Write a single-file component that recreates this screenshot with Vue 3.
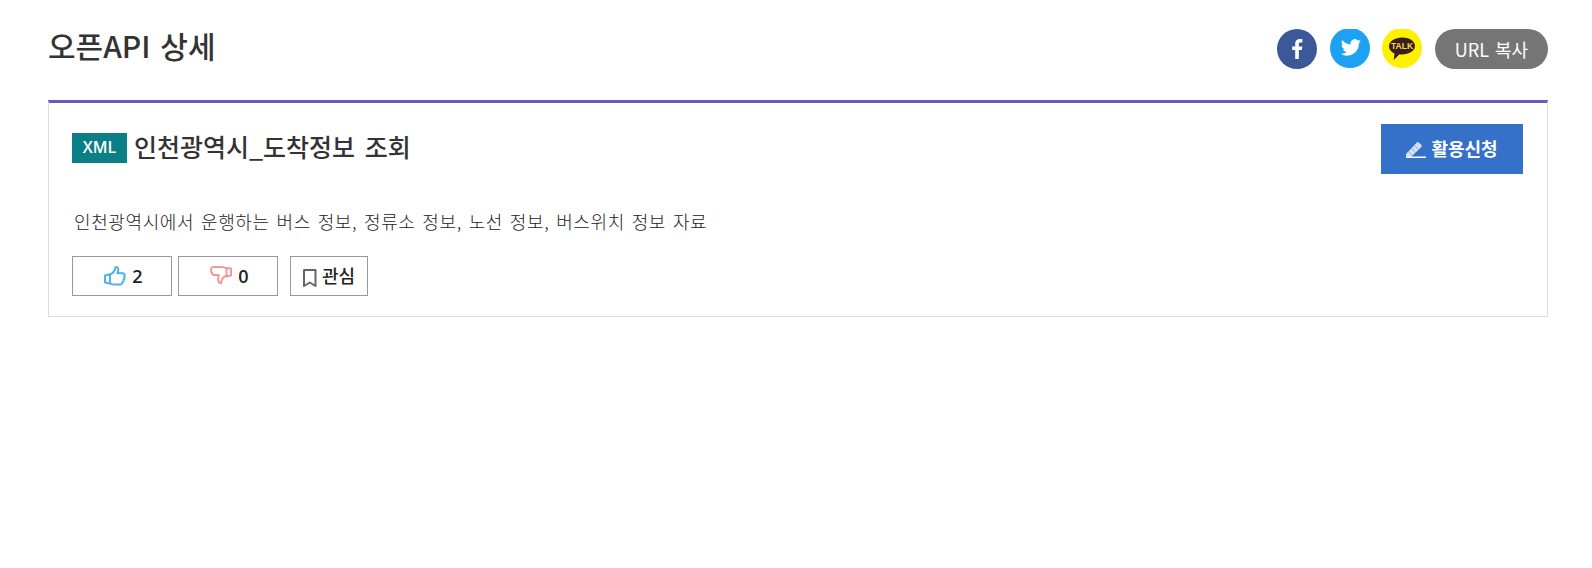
<script setup>
const desc = '인천광역시에서 운행하는 버스 정보, 정류소 정보, 노선 정보, 버스위치 정보 자료'
</script>

<template>
  <div class="page">
    <div class="top">
      <h2 class="page-title">오픈API 상세</h2>
      <div class="share">
        <a class="sns fb">
          <svg width="40" height="40" viewBox="0 0 40 40"><path fill="#fff" d="M21.800 30v-9h3l.5-3.600h-3.500v-2.200c0-1 .3-1.700 1.800-1.700h1.800V10.300c-.4 0-1.500-.2-2.700-.2-2.700 0-4.500 1.600-4.500 4.600v2.700h-3V21h3v9z"/></svg>
        </a>
        <a class="sns tw">
          <svg width="40" height="40" viewBox="-2 -1 27 27"><path fill="#fff" d="M19 7.900c-.5.300-1.100.4-1.600.5.600-.4 1-1 1.200-1.600-.5.300-1.100.6-1.800.7a2.800 2.800 0 0 0-4.800 2.600c-2.300-.1-4.400-1.200-5.800-3-.7 1.300-.4 2.900.9 3.700-.5 0-.9-.1-1.300-.3 0 1.400 1 2.500 2.300 2.800-.4.100-.8.100-1.300 0 .4 1.100 1.400 1.900 2.600 1.900a5.600 5.600 0 0 1-4.100 1.200 8 8 0 0 0 12.200-7.100c.6-.4 1.100-.9 1.500-1.400z"/></svg>
        </a>
        <a class="sns ka">
          <svg width="40" height="40" viewBox="0 0 40 40">
            <path fill="#3a1d1d" d="M20 9.500c-7 0-13 3.800-13 8.700 0 3.100 2.200 5.700 5.600 7.200l-.9 6c0 .3.200.4.500.2l5.300-5.400c.8.100 1.600.2 2.500.2 7 0 13-3.600 13-8.500S27 9.500 20 9.500z"/>
            <text x="20" y="21" text-anchor="middle" class="talk">TALK</text>
          </svg>
        </a>
        <button class="url-btn">URL 복사</button>
      </div>
    </div>

    <div class="card">
      <div class="card-head">
        <div class="name">
          <span class="badge">XML</span>
          <strong class="api-title">인천광역시_도착정보 조회</strong>
        </div>
        <a class="apply">
          <svg width="20" height="18" viewBox="0 0 20 18">
            <path fill="#d4e0f4" d="M0 14 10.800 2.600c.6-.6 1.500-.6 2 0l2.600 2.400c.6.600.6 1.400 0 2L5 17H0z"/>
            <path fill="none" stroke="#7fa3dc" stroke-width=".8" d="M2.500 11.500l4 4M5.500 8.500l4 4M8.500 5.500l4 4"/>
            <path fill="#fff" d="M7 16.500h13V18H0v-1z"/>
          </svg>
          <span class="apply-text">활용신청</span>
        </a>
      </div>
      <p class="desc">{{ desc }}</p>
      <div class="actions">
        <button class="act vote">
          <svg width="22" height="20" viewBox="0 0 22 20" fill="none" stroke="#4db3e8" stroke-width="2" stroke-linejoin="round">
            <path d="M1 9.500l5-1.300v9.300L1 16.500z"/>
            <path d="M6 8.500c3-1.200 5-3.800 5.500-7 .1-.8 2.800-.8 2.800 2 0 1.300-.4 2.500-1 3.700h5.400c2.200 0 2.500 2.500 1.300 3.500.8 1 .6 2.400-.5 3 .4 1.200-.1 2.300-1.200 2.600.1 1.200-.6 2.200-2.200 2.200H10c-1.600 0-2.700-.6-4-1"/>
          </svg>
          <span>2</span>
        </button>
        <button class="act vote">
          <svg width="22" height="20" viewBox="0 0 22 20" fill="none" stroke="#f09a9a" stroke-width="2" stroke-linejoin="round">
            <path d="M21 2.500l-4.500-.6v8.600l4.500-.9z"/>
            <path d="M16.500 2.500C15 1.600 13.500 1 12 1H3.500C2 1 1 2 1.300 3.200 1 4.500 1 6 2 7c0 1.200 1 2 2.500 2h4.300c-.6 2-.8 3.500-.5 5.500.4 2.500 3 3.500 3 2 .2-3.500 2.400-5.800 5.200-7"/>
          </svg>
          <span>0</span>
        </button>
        <button class="act fav">
          <svg class="mark" width="14" height="18" viewBox="0 0 14 18" fill="none" stroke="#666" stroke-width="2" stroke-linejoin="round">
            <path d="M1 1h11.500v16L6.800 13.500 1 17z"/>
          </svg>
          <span>관심</span>
        </button>
      </div>
    </div>
  </div>
</template>

<style scoped>
.page {
  padding: 0 44px 0 48px;
  font-family: "Noto Sans CJK KR", "Open Sans", sans-serif;
  color: #333;
}
.top {
  display: flex;
  justify-content: space-between;
  align-items: flex-start;
  height: 100px;
}
.page-title {
  margin: 24px 0 0;
  font-size: 30px;
  line-height: 42px;
  font-weight: 500;
  word-spacing: 3px;
}
.share {
  display: flex;
  align-items: flex-start;
  margin-top: 29px;
  height: 40px;
  overflow: hidden;
}
.sns {
  width: 40px;
  height: 40px;
  border-radius: 50%;
  margin-right: 13px;
  display: block;
}
.sns svg { display: block; }
.fb { background: #3b5998; }
.tw {
  background: #1da1f2;
  margin-top: -1px;
  margin-right: 12px;
}
.ka {
  background: #fff000;
  margin-top: -1px;
}
.talk {
  font-family: "Liberation Sans", sans-serif;
  font-size: 8.500px;
  font-weight: 700;
  fill: #f5d94e;
}
.url-btn {
  width: 113px;
  height: 40px;
  border: 0;
  border-radius: 20px;
  background: #757575;
  color: #fff;
  font-family: "Noto Sans CJK KR", "Open Sans", sans-serif;
  font-size: 18px;
  font-weight: 400;
  word-spacing: 2px;
  padding: 0;
}
.card {
  border: 1px solid #ddd;
  border-top: 3px solid #675ac4;
  height: 217px;
  padding: 21px 24px 0 23px;
  box-sizing: border-box;
}
.card-head {
  display: flex;
  justify-content: space-between;
  align-items: flex-start;
}
.name {
  display: flex;
  align-items: flex-start;
  margin-top: 9px;
}
.badge {
  width: 55px;
  height: 30px;
  line-height: 28px;
  background: #0a7f85;
  color: #fff;
  font-family: "Open Sans", sans-serif;
  font-size: 16px;
  font-weight: 600;
  text-align: center;
  margin-right: 7px;
}
.api-title {
  font-size: 25px;
  line-height: 26px;
  font-weight: 500;
  word-spacing: 4px;
}
.apply {
  width: 142px;
  height: 50px;
  background: #3571c8;
  color: #fff;
  font-size: 18px;
  font-weight: 700;
  display: flex;
  align-items: center;
  justify-content: center;
  gap: 5px;
}
.apply-text {
  margin-bottom: 2px;
}
.desc {
  margin: 24px 0 0 2px;
  font-size: 18px;
  line-height: 46px;
  font-weight: 300;
  letter-spacing: .6px;
  word-spacing: 2.300px;
  color: #222;
}
.actions {
  display: flex;
  margin-top: 12px;
}
.act {
  height: 40px;
  border: 1px solid #999;
  background: #fff;
  display: flex;
  align-items: center;
  justify-content: center;
  padding: 0;
  font-family: "Open Sans", "Noto Sans CJK KR", sans-serif;
  font-size: 18px;
  font-weight: 600;
  color: #222;
}
.vote {
  width: 100px;
  margin-right: 6px;
  padding-left: 3px;
  gap: 6px;
}
.fav {
  width: 78px;
  margin-left: 6px;
  gap: 5px;
  font-family: "Noto Sans CJK KR", sans-serif;
  font-weight: 500;
}
.fav span {
  margin-top: -3px;
}
.mark {
  margin-top: 4px;
}
</style>

<style>
html, body { background: #fff; }
</style>
